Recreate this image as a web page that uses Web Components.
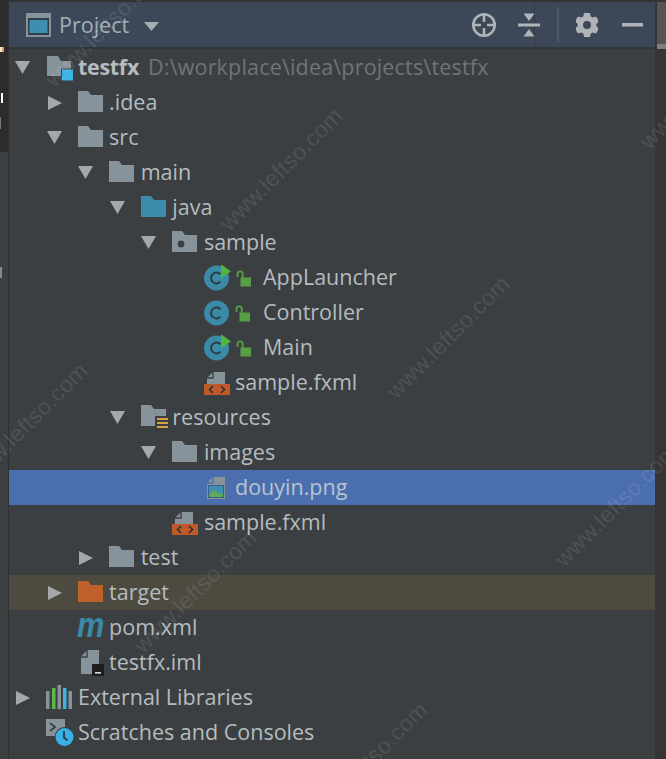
<!DOCTYPE html>
<html><head><meta charset="utf-8"><style>
html,body{margin:0;padding:0;background:#3c3f41;overflow:hidden}
</style></head><body>
<project-panel>
  <panel-header slot="header"></panel-header>
  <tree-row d="0" open icon="module" bold hint="D:\workplace\idea\projects\testfx">testfx</tree-row>
  <tree-row d="1" closed icon="folder">.idea</tree-row>
  <tree-row d="1" open icon="folder">src</tree-row>
  <tree-row d="2" open icon="folder">main</tree-row>
  <tree-row d="3" open icon="java">java</tree-row>
  <tree-row d="4" open icon="package">sample</tree-row>
  <tree-row d="5" icon="classrun" lock>AppLauncher</tree-row>
  <tree-row d="5" icon="class" lock>Controller</tree-row>
  <tree-row d="5" icon="classrun" lock>Main</tree-row>
  <tree-row d="5" icon="fxml" tight>sample.fxml</tree-row>
  <tree-row d="3" open icon="resources">resources</tree-row>
  <tree-row d="4" open icon="folder">images</tree-row>
  <tree-row d="5" icon="png" tight selected>douyin.png</tree-row>
  <tree-row d="4" icon="fxml">sample.fxml</tree-row>
  <tree-row d="2" closed icon="folder">test</tree-row>
  <tree-row d="1" closed icon="target" excluded>target</tree-row>
  <tree-row d="1" icon="maven">pom.xml</tree-row>
  <tree-row d="1" icon="iml">testfx.iml</tree-row>
  <tree-row d="0" closed icon="libs">External Libraries</tree-row>
  <tree-row d="0" icon="scratch">Scratches and Consoles</tree-row>
</project-panel>
<script>
const F='#87939a';
const folder=c=>`<path d="M0 1h10l3 4h12v17H0z" fill="${c}"/>`;
const arr=(body,w=26,h=26)=>`<svg width="${w}" height="${h}" viewBox="0 0 ${w} ${h}">${body}</svg>`;
const classC=`<circle cx="12.5" cy="13" r="12.5" fill="#3b8aa8"/><path d="M16.5 9.4a5.4 5.4 0 1 0 0 7.2" fill="none" stroke="#2c3c46" stroke-width="2"/>`;
const ICONS={
 folder:arr(folder(F)),
 java:arr(folder('#3c8bab')),
 target:arr(folder('#c0602c')),
 package:arr(folder(F)+'<circle cx="9" cy="14" r="3.4" fill="#3c3f41"/>'),
 module:arr('<path d="M1 2h11l3 5h10v8H16v7H1z" fill="'+F+'"/><rect x="15" y="14.5" width="12" height="12" fill="#3c3f41"/><rect x="16" y="15.5" width="11" height="11" fill="#3bb3e6"/>',28,28),
 resources:arr(folder(F)+'<rect x="14" y="12" width="13" height="15" fill="#3c3f41"/><path d="M16 15h11M16 19h11M16 23h11" stroke="#d69f3f" stroke-width="2.2"/>',28,28),
 classrun:arr(classC+'<path d="M17 -1l10 7.5-10 7z" fill="#4db53d"/>',27,26),
 class:arr(classC),
 fxml:arr('<path d="M9 3h12v12H3v-6z" fill="'+F+'"/><path d="M9 3v6H3" fill="none" stroke="#3c3f41" stroke-width="1.4"/><rect x="0" y="15" width="26" height="11" fill="#c0592a"/><path d="M9 17l-3.5 3.5L9 24M17 17l3.5 3.5L17 24" fill="none" stroke="#2f2f2f" stroke-width="1.6"/>',26,27),
 png:arr('<path d="M9 2h12v22H3V8z" fill="#87939a"/><path d="M9 2v6H3" fill="none" stroke="#4a6fb5" stroke-width="1.4"/><rect x="5" y="11" width="14" height="11" fill="#3f8fb5"/><path d="M5 22v-3l5-4 4 3 5 1v3z" fill="#5fa655"/><rect x="4.5" y="10.5" width="15" height="12" fill="none" stroke="#3c5f86"/>',24,26),
 iml:arr('<path d="M9 1h12v24H3V8z" fill="'+F+'"/><path d="M9 1v7H3" fill="none" stroke="#3c3f41" stroke-width="1.4"/><rect x="14" y="15" width="12" height="12" fill="#1e1e1e"/><rect x="17" y="23" width="6" height="1.6" fill="#dcdcdc"/>',26,28),
 libs:arr('<rect x="0" y="6" width="3.5" height="18" fill="'+F+'"/><rect x="6" y="3" width="3.5" height="21" fill="#5cb947"/><rect x="11.5" y="0" width="3.5" height="24" fill="'+F+'"/><rect x="17" y="3" width="3.5" height="21" fill="#3bb3e6"/><rect x="22.5" y="6" width="3.5" height="18" fill="'+F+'"/>',26,26),
 scratch:arr('<rect x="0" y="0" width="19" height="17" fill="'+F+'"/><path d="M4 4l5 4-5 4" fill="none" stroke="#3c3f41" stroke-width="1.8"/><circle cx="18.5" cy="18" r="10" fill="#3c3f41"/><circle cx="18.5" cy="18" r="9" fill="#38b0e3"/><path d="M18 12v6.5l3.5 3" fill="none" stroke="#2b3a44" stroke-width="1.8"/>',28,28)
};

class ProjectPanel extends HTMLElement{
 constructor(){super();this.attachShadow({mode:'open'}).innerHTML=`<style>
 :host{display:grid;grid-template-columns:9px 1fr 11px;grid-template-rows:47px 1fr;width:666px;height:759px;background:#3c3f41;position:relative;overflow:hidden;font-family:"Open Sans","Noto Sans",sans-serif;color:#b4bcc0}
 .lstrip{grid-row:1/3;box-sizing:border-box;border-right:1px solid #303132;
   background:
    linear-gradient(#fff,#fff) 1px 93px/2px 10px no-repeat,
    linear-gradient(#777,#777) 0 117px/1px 12px no-repeat,
    linear-gradient(#888,#888) 0 267px/2px 11px no-repeat,
    linear-gradient(90deg,#e8e8e8 2px,#e0a040 2px) 0 47px/4px 5px no-repeat,
    linear-gradient(#2c2c2c 152px,#3c3f41 152px)}
 .rstrip{grid-row:1/3;grid-column:3;background:
    linear-gradient(#555,#555) 2px 2px/9px 42px no-repeat,
    linear-gradient(#7d7f81,#7d7f81) 2px 44px/9px 5px no-repeat,
    #343536}
 .h{grid-column:2;grid-row:1;padding-top:2px;background:#333;box-sizing:border-box}
 .tree{grid-column:2;grid-row:2;border-top:2px solid #343536;padding-top:1px;display:flex;flex-direction:column}
 </style><div class="lstrip"></div><div class="h"><slot name="header"></slot></div><div class="tree"><slot></slot></div><div class="rstrip"></div><water-marks></water-marks>`;}
}
class PanelHeader extends HTMLElement{
 constructor(){super();this.attachShadow({mode:'open'}).innerHTML=`<style>
 :host{display:flex;align-items:center;height:45px;background:linear-gradient(90deg,#3c4858 525px,#333a44 525px,#333a44 526px,#3c4858 526px);box-sizing:border-box;padding-left:17px;color:#a6aeb4;font-size:21.5px}
 svg{display:block;flex:none}
 .title{margin-left:8px;margin-bottom:1px}
 .caret{margin-left:15px;margin-top:3px}
 .sp{flex:1}
 .sep{width:2px;height:35px;background:#4f5966;margin:0 17px 0 17px}
 </style>
 <svg width="25" height="24" viewBox="0 0 25 24"><rect width="25" height="24" fill="#87939a"/><rect x="2" y="5" width="21" height="17" fill="#2f3e4c"/><rect x="3.5" y="7" width="18" height="13" fill="#3d8eb0"/></svg>
 <span class="title">Project</span>
 <svg class="caret" width="15" height="9" viewBox="0 0 15 9"><path d="M0 0h15L7.5 9z" fill="#a6aeb4"/></svg>
 <span class="sp"></span>
 <svg width="26" height="26" viewBox="0 0 26 26" fill="none" stroke="#b0b4b8" stroke-width="2.6"><circle cx="13" cy="13" r="10.7"/><path d="M13 2v8M13 16v8M2 13h8M16 13h8"/></svg>
 <svg style="margin-left:21px" width="22" height="26" viewBox="0 0 22 26"><path d="M0 11.500h22v3H0z" fill="#b0b4b8"/><path d="M5.500 1.500h11L11 9zM5.500 24.500h11L11 17z" fill="#b0b4b8"/></svg>
 <span class="sep"></span>
 <svg width="22" height="24" viewBox="0 0 22 24"><path fill="#b0b4b8" fill-rule="evenodd" d="M8 0h6l.7 3.400 2 1.200L20 3.500l3 5-2.600 2.300v2.400L23 15.500l-3 5-3.300-1.100-2 1.200L14 24H8l-.7-3.400-2-1.200L2 20.500l-3-5 2.600-2.300v-2.400L-1 8.500l3-5 3.300 1.100 2-1.200zM11 8a4 4 0 1 0 0 8 4 4 0 0 0 0-8z"/></svg>
 <svg style="margin:0 12px 0 24px" width="21" height="4" viewBox="0 0 21 4"><rect width="21" height="3.500" fill="#b0b4b8"/></svg>`;}
}
class TreeRow extends HTMLElement{
 connectedCallback(){
  if(this.shadowRoot)return;
  const d=+this.getAttribute('d');
  const open=this.hasAttribute('open'),closed=this.hasAttribute('closed');
  const arrow=open?'<svg width="15" height="13" viewBox="0 0 15 13"><path d="M0 0h15L7.500 13z" fill="#a5a8aa"/></svg>':closed?'<svg style="margin-left:1px" width="14" height="14" viewBox="0 0 14 14"><path d="M0 0l14 7-14 7z" fill="#a5a8aa"/></svg>':'';
  const lock=this.hasAttribute('lock')?'<svg class="lock" width="15" height="17" viewBox="0 0 15 17"><path d="M1.500 7V4a2.600 2.600 0 0 1 5.200 0V8" fill="none" stroke="#55a044" stroke-width="1.800"/><rect x="4.500" y="7.500" width="10.500" height="9" fill="#55a044"/></svg>':'';
  const hint=this.getAttribute('hint');
  const nudge=(d>0&&!this.hasAttribute('tight')&&!this.hasAttribute('lock'))?-.5:0;
  this.attachShadow({mode:'open'}).innerHTML=`<style>
  :host{display:flex;align-items:center;height:35px;flex:none;font-size:21.5px;white-space:nowrap;padding-left:calc(${d} * 31.6px)}
  :host([selected]){background:#4b6eaf}
  :host([excluded]){background:#4d4a3f}
  :host([selected]) .lbl{color:#b9c4cf}
  .a{width:37px;padding-left:6px;box-sizing:border-box;flex:none;display:flex;align-items:center}
  .i{width:${this.hasAttribute('tight')?'31px':'32px'};flex:none;display:flex;align-items:center;position:relative}
  .i.l{width:59px}
  svg{display:block;flex:none}
  .lock{margin-left:5px;margin-top:2px}
  .m{font:italic bold 35px/26px "Liberation Sans",sans-serif;color:#3b8aa8;display:block;transform:scaleX(.88);transform-origin:0 50%;margin-left:-1px;height:26px;margin-top:-6px}
  .lbl{margin-bottom:2px;margin-left:${nudge}px;${this.hasAttribute('bold')?'font-weight:700;letter-spacing:-.3px;':''}}
  .hint{color:#6f7477;margin-left:9px;margin-bottom:2px;letter-spacing:.18px}
  </style><span class="a">${arrow}</span><span class="i ${lock?'l':''}">${this.getAttribute('icon')==='maven'?'<span class="m">m</span>':ICONS[this.getAttribute('icon')]||''}${lock}</span><span class="lbl"><slot></slot></span>${hint?`<span class="hint">${hint}</span>`:''}`;
 }
}
class WaterMarks extends HTMLElement{
 constructor(){super();
  const pts=[[399,403],[232,235],[567,571],[-23,490],[146,657],[317,829],[57,91],[652,153]];
  this.attachShadow({mode:'open'}).innerHTML=`<style>
  :host{position:absolute;inset:0;pointer-events:none;overflow:hidden;display:block}
  span{position:absolute;font:23px "Liberation Sans",sans-serif;color:rgba(255,255,255,.11);transform:rotate(-45deg);transform-origin:0 100%;white-space:nowrap;line-height:23px;letter-spacing:.2px}
  </style>`+pts.map(p=>`<span style="left:${p[0]}px;top:${p[1]-23}px">www.leftso.com</span>`).join('');}
}
customElements.define('water-marks',WaterMarks);
customElements.define('panel-header',PanelHeader);
customElements.define('tree-row',TreeRow);
customElements.define('project-panel',ProjectPanel);
</script>
</body></html>
